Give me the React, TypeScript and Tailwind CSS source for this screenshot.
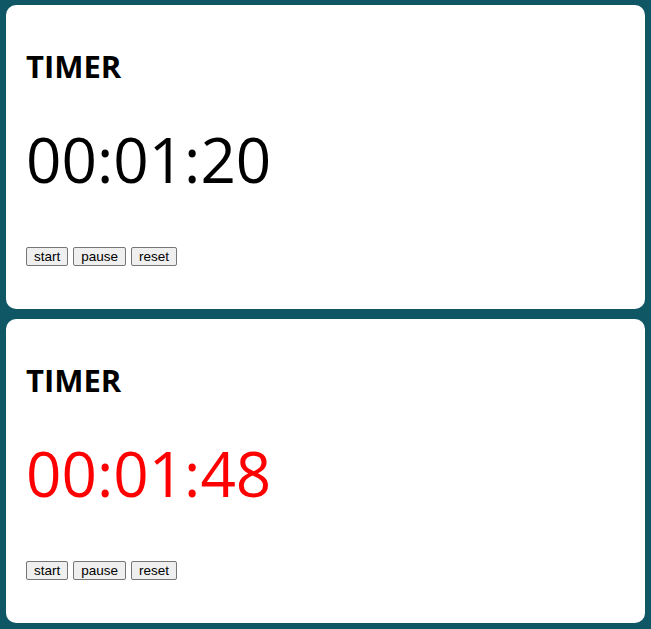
import React from 'react';

interface TimerCardProps {
    time: string;
    warn?: boolean;
}

function TimerCard({ time, warn }: TimerCardProps) {
    return (
        <div className="h-[304px] rounded-[10px] bg-white px-[20px] pt-[41px]">
            <h2 className="text-[31px] font-bold leading-[40px] text-black" style={{ fontFamily: '"Open Sans", sans-serif' }}>
                TIMER
            </h2>
            <div
                className={`mt-[42px] text-[62px] leading-[62px] ${warn ? 'text-[#ff0000]' : 'text-black'}`}
                style={{ fontFamily: '"Open Sans", sans-serif' }}
            >
                {time}
            </div>
            <div className="mt-[57px] flex gap-[5px]" style={{ fontFamily: '"Liberation Sans", Arial, sans-serif' }}>
                <button className="h-[19px] rounded-[2px] border border-[#767676] bg-[#efefef] px-[7px] text-[13.5px] leading-[17px] text-black">start</button>
                <button className="h-[19px] rounded-[2px] border border-[#767676] bg-[#efefef] px-[7px] text-[13.5px] leading-[17px] text-black">pause</button>
                <button className="h-[19px] rounded-[2px] border border-[#767676] bg-[#efefef] px-[7px] text-[13.5px] leading-[17px] text-black">reset</button>
            </div>
        </div>
    );
}

export default function App() {
    return (
        <div className="min-h-screen bg-[#105766] px-[6px] pt-[5px] pb-[6px]">
            <div className="flex flex-col gap-[10px]">
                <TimerCard time="00:01:20" />
                <TimerCard time="00:01:48" warn />
            </div>
        </div>
    );
}
